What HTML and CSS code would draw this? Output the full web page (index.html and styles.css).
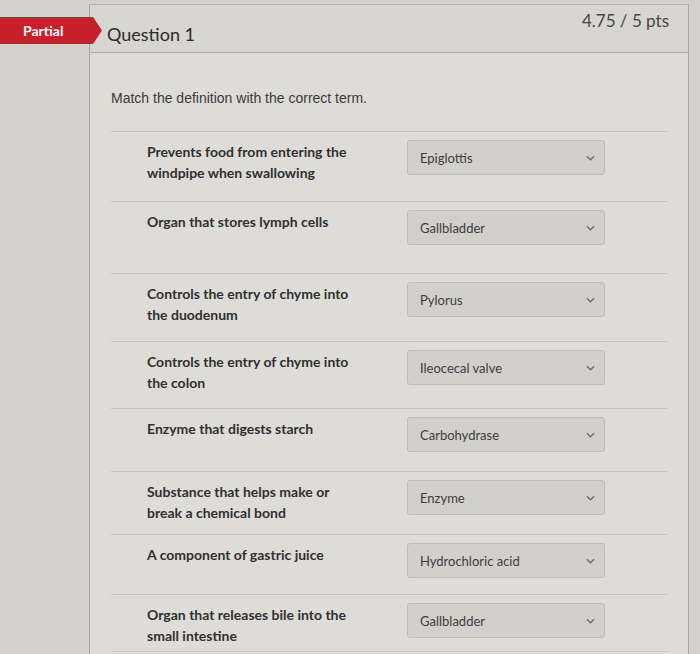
FILE: index.html
```html
<!DOCTYPE html>
<html lang="en">
<head>
<meta charset="utf-8">
<title>Question 1</title>
<link rel="stylesheet" href="styles.css">
</head>
<body>
<div class="page">
  <div class="status">Partial</div>
  <section class="question">
    <header class="q-header">
      <h2 class="q-title">Question 1</h2>
      <span class="pts">4.75 / 5 pts</span>
    </header>
    <div class="q-body">
      <p class="prompt">Match the definition with the correct term.</p>
      <div class="matches">
        <div class="match">
          <div class="def">Prevents food from entering the windpipe when swallowing</div>
          <div class="select"><span>Epiglottis</span><svg class="chev" viewBox="0 0 10 6"><path d="M1 1 L5 5 L9 1"/></svg></div>
        </div>
        <div class="match">
          <div class="def">Organ that stores lymph cells</div>
          <div class="select"><span>Gallbladder</span><svg class="chev" viewBox="0 0 10 6"><path d="M1 1 L5 5 L9 1"/></svg></div>
        </div>
        <div class="match">
          <div class="def">Controls the entry of chyme into the duodenum</div>
          <div class="select"><span>Pylorus</span><svg class="chev" viewBox="0 0 10 6"><path d="M1 1 L5 5 L9 1"/></svg></div>
        </div>
        <div class="match">
          <div class="def">Controls the entry of chyme into the colon</div>
          <div class="select"><span>Ileocecal valve</span><svg class="chev" viewBox="0 0 10 6"><path d="M1 1 L5 5 L9 1"/></svg></div>
        </div>
        <div class="match">
          <div class="def">Enzyme that digests starch</div>
          <div class="select"><span>Carbohydrase</span><svg class="chev" viewBox="0 0 10 6"><path d="M1 1 L5 5 L9 1"/></svg></div>
        </div>
        <div class="match">
          <div class="def">Substance that helps make or break a chemical bond</div>
          <div class="select"><span>Enzyme</span><svg class="chev" viewBox="0 0 10 6"><path d="M1 1 L5 5 L9 1"/></svg></div>
        </div>
        <div class="match">
          <div class="def">A component of gastric juice</div>
          <div class="select"><span>Hydrochloric acid</span><svg class="chev" viewBox="0 0 10 6"><path d="M1 1 L5 5 L9 1"/></svg></div>
        </div>
        <div class="match">
          <div class="def">Organ that releases bile into the small intestine</div>
          <div class="select"><span>Gallbladder</span><svg class="chev" viewBox="0 0 10 6"><path d="M1 1 L5 5 L9 1"/></svg></div>
        </div>
      </div>
    </div>
  </section>
</div>
</body>
</html>
```

FILE: styles.css
```css
html, body {
  margin: 0;
  padding: 0;
}
body {
  background: #d3d1cc;
  font-family: Lato, "Liberation Sans", sans-serif;
  color: #2f2f2f;
  width: 700px;
  height: 654px;
  overflow: hidden;
}
.page {
  position: relative;
  padding-top: 4px;
  height: 654px;
  box-sizing: border-box;
}
.status {
  position: absolute;
  left: 0;
  top: 17px;
  width: 102px;
  height: 27px;
  background: #c8202b;
  clip-path: polygon(0 0, 93px 0, 102px 50%, 93px 100%, 0 100%);
  color: #fff;
  font-size: 14px;
  font-weight: 700;
  line-height: 27px;
  padding-left: 23px;
  box-sizing: border-box;
  z-index: 2;
}
.question {
  margin-left: 89px;
  width: 600px;
  height: 650px;
  background: #dedcd7;
  border-left: 1px solid #a9a7a3;
  border-right: 1px solid #a9a7a3;
  border-top: 1px solid #b3b1ad;
  box-sizing: border-box;
  overflow: hidden;
}
.q-header {
  display: flex;
  justify-content: space-between;
  align-items: flex-start;
  height: 47px;
  background: #d8d6d1;
  border-bottom: 1px solid #aeaca8;
  padding: 0 19px 0 17px;
}
.q-title {
  margin: 18px 0 0 0;
  font-size: 18px;
  line-height: 22px;
  font-weight: 400;
  color: #2b2b2b;
}
.pts {
  margin-top: 6px;
  font-size: 17px;
  line-height: 20px;
  color: #474747;
}
.q-body {
  padding: 0 21px 0 21px;
}
.prompt {
  margin: 37px 0 25px 0;
  font-family: "Liberation Sans", Arial, sans-serif;
  font-size: 14px;
  line-height: 16px;
  color: #3a3a3a;
}
.matches {
  border-bottom: 1px solid #c9c7c2;
}
.match {
  display: flex;
  align-items: flex-start;
  border-top: 1px solid #c6c4bf;
  box-sizing: border-box;
  height: 65px;
  padding-left: 36px;
}
.match:nth-child(1) { height: 70px; }
.match:nth-child(2) { height: 72px; }
.match:nth-child(3) { height: 68px; }
.match:nth-child(4) { height: 67px; }
.match:nth-child(5) { height: 63px; }
.match:nth-child(6) { height: 63px; }
.match:nth-child(7) { height: 60px; }
.match:nth-child(8) { height: 57px; }
.def {
  flex: 0 0 260px;
  box-sizing: border-box;
  padding: 9px 42px 0 0;
  font-size: 14px;
  font-weight: 700;
  line-height: 21px;
  color: #303030;
}
.select {
  margin-top: 8px;
  width: 198px;
  height: 35px;
  box-sizing: border-box;
  display: flex;
  align-items: center;
  justify-content: space-between;
  padding: 0 9px 0 12px;
  background: #d2d0cb;
  border: 1px solid #bebcb7;
  border-radius: 3px;
  font-size: 13px;
  color: #3d3d3d;
}
.chev {
  width: 9px;
  height: 6px;
  fill: none;
  stroke: #6a6a6a;
  stroke-width: 1.4;
}
```
